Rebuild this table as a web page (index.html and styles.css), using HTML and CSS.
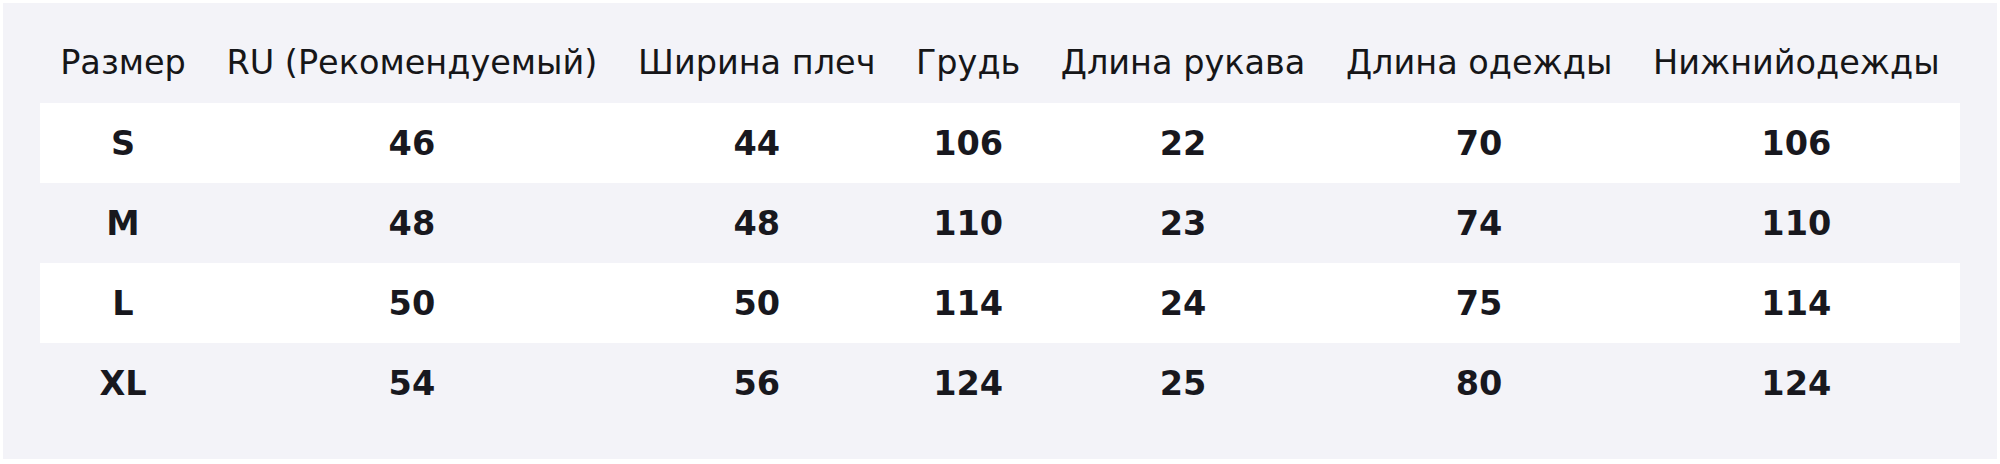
FILE: index.html
```html
<!DOCTYPE html>
<html lang="ru">
<head>
<meta charset="utf-8">
<title>Таблица размеров</title>
<link rel="stylesheet" href="styles.css">
</head>
<body>
<div class="panel">
  <table class="size-table">
    <thead>
      <tr>
        <th>Размер</th>
        <th>RU (Рекомендуемый)</th>
        <th>Ширина плеч</th>
        <th>Грудь</th>
        <th>Длина рукава</th>
        <th>Длина одежды</th>
        <th>Нижнийодежды</th>
      </tr>
    </thead>
    <tbody>
      <tr><td>S</td><td>46</td><td>44</td><td>106</td><td>22</td><td>70</td><td>106</td></tr>
      <tr><td>M</td><td>48</td><td>48</td><td>110</td><td>23</td><td>74</td><td>110</td></tr>
      <tr><td>L</td><td>50</td><td>50</td><td>114</td><td>24</td><td>75</td><td>114</td></tr>
      <tr><td>XL</td><td>54</td><td>56</td><td>124</td><td>25</td><td>80</td><td>124</td></tr>
    </tbody>
  </table>
</div>
</body>
</html>
```

FILE: styles.css
```css
html, body {
  margin: 0;
  padding: 0;
  background: #ffffff;
}

body {
  font-family: "DejaVu Sans", "Noto Sans", sans-serif;
  color: #18181c;
}

.panel {
  margin: 3px;
  background: #f3f3f8;
  padding: 20px 37px 36px 37px;
}

.size-table {
  width: 100%;
  border-collapse: collapse;
  border-spacing: 0;
}

.size-table th,
.size-table td {
  padding: 20px 20px;
  line-height: 40px;
  font-size: 33.5px;
  text-align: center;
  vertical-align: middle;
  white-space: nowrap;
}

.size-table th {
  font-weight: normal;
  color: #161618;
}

.size-table td {
  padding-top: 21px;
  padding-bottom: 19px;
  font-weight: bold;
  color: #18181e;
}

.size-table tbody tr:nth-child(odd) {
  background: #ffffff;
}
```
